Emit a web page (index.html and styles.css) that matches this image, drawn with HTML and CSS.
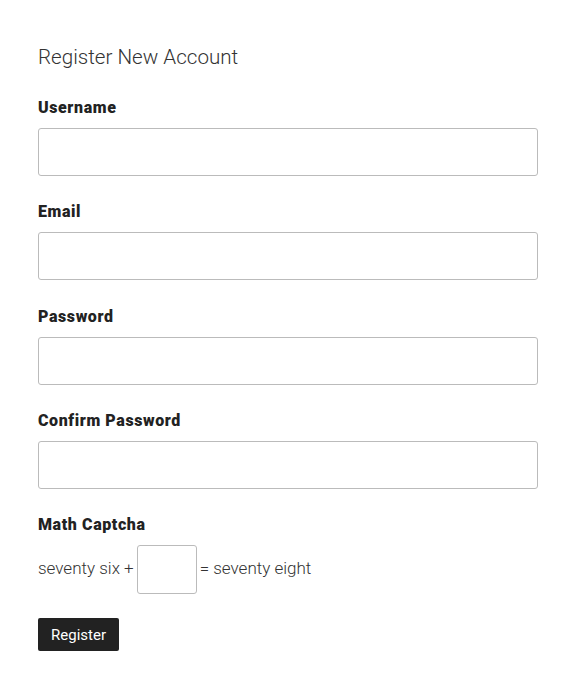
FILE: index.html
```html
<!DOCTYPE html>
<html>
<head>
<meta charset="utf-8">
<link rel="stylesheet" href="styles.css">
</head>
<body>
<div class="page">
  <h2 class="title">Register New Account</h2>
  <form class="form">
    <div class="field">
      <label class="label">Username</label>
      <input class="input" type="text">
    </div>
    <div class="field">
      <label class="label">Email</label>
      <input class="input" type="text">
    </div>
    <div class="field">
      <label class="label">Password</label>
      <input class="input" type="password">
    </div>
    <div class="field">
      <label class="label">Confirm Password</label>
      <input class="input" type="password">
    </div>
    <div class="field captcha">
      <label class="label">Math Captcha</label>
      <div class="captcha-row">
        <span class="captcha-text">seventy six +</span>
        <input class="captcha-input" type="text">
        <span class="captcha-text">= seventy eight</span>
      </div>
    </div>
    <button class="button" type="button">Register</button>
  </form>
</div>
</body>
</html>
```

FILE: styles.css
```css
html, body {
  margin: 0;
  padding: 0;
  background: #fff;
}
body {
  font-family: "Roboto", "Liberation Sans", sans-serif;
  color: #222;
}
.page {
  width: 500px;
  padding: 45px 46px 0 38px;
}
.title {
  margin: 0 0 28px;
  font-size: 20.6px;
  line-height: 24px;
  font-weight: 300;
  color: #333;
}
.form {
  display: flex;
  flex-direction: column;
  align-items: flex-start;
}
.field {
  display: flex;
  flex-direction: column;
  width: 100%;
  margin-bottom: 25.33px;
}
.label {
  display: block;
  font-size: 16px;
  line-height: 20px;
  padding-top: 1px;
  font-weight: 900;
  letter-spacing: 0.6px;
  color: #222;
  margin-bottom: 10px;
}
.input {
  box-sizing: border-box;
  width: 500px;
  height: 48px;
  border: 1px solid #bbb;
  border-radius: 3px;
  margin: 0;
  padding: 0 10px;
  background: #fff;
}
.captcha {
  margin-bottom: 24px;
}
.captcha .label {
  margin-bottom: 10px;
}
.captcha-row {
  display: flex;
  align-items: center;
  gap: 3px;
  font-size: 17px;
  font-weight: 300;
  color: #333;
}
.captcha-text {
  margin-bottom: 4px;
}
.captcha-input {
  box-sizing: border-box;
  width: 60px;
  height: 49px;
  border: 1px solid #bbb;
  border-radius: 3px;
  margin: 0;
  padding: 0;
}
.button {
  box-sizing: border-box;
  width: 81px;
  height: 33px;
  background: #222;
  color: #fff;
  border: none;
  border-radius: 2px;
  font-family: "Roboto", "Liberation Sans", sans-serif;
  font-size: 15px;
  font-weight: 400;
  padding: 0;
}
```
